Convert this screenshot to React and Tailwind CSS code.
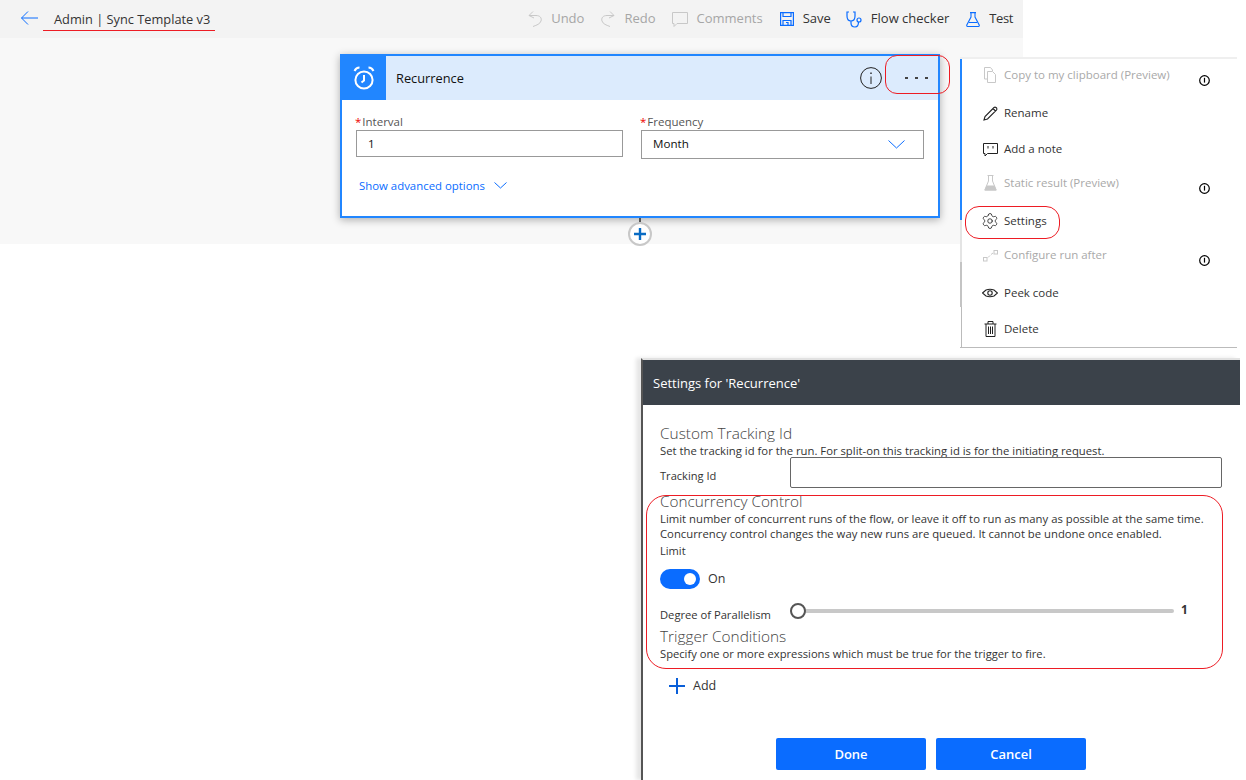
import React from 'react';
import { Settings } from 'lucide-react';

const Line = ({ w, h, d, className, sw = 1, children }) => (
  <svg width={w} height={h} viewBox={`0 0 ${w} ${h}`} className={`shrink-0 ${className || ''}`} fill="none" stroke="currentColor" strokeWidth={sw}>
    {d && <path d={d} />}
    {children}
  </svg>
);

const BackIcon = (p) => <Line w={17} h={14} d="M.5 7H17M7 .5L.5 7L7 13.5" {...p} />;
const UndoIcon = (p) => <Line w={14} h={16} d="M5 .5L1 4.5L6 7M1 4.5H8C12 4.5 14 7 13 10C12 13 9 14 5 15.5" {...p} />;
const RedoIcon = (p) => <Line w={14} h={16} d="M9 .5L13 4.5L8 7M13 4.5H6C2 4.5 0 7 1 10C2 13 5 14 9 15.5" {...p} />;
const CommentIcon = (p) => <Line w={16} h={15} d="M.5.5H15.5V11.5H5L2 14.5V11.5H.5Z" {...p} />;
const SaveIcon = (p) => <Line w={14} h={14} sw={1.2} d="M.6.6H13.4V13.4H.6ZM3 .6V4.5H11V.6M3 13.4V8.5H11V13.4M6 10.5H8V13" {...p} />;
const ScopeIcon = (p) => (
  <Line w={16} h={17} sw={1.2} d="M3 1H1V5C1 9 3 10 5 10C7 10 9 9 9 5V1H7M5 10V12C5 15 7 16 9 16C12 16 12.5 13 12.5 11" {...p}>
    <circle cx="13" cy="9" r="2" />
  </Line>
);
const FlaskIcon = (p) => <Line w={14} h={15} sw={1.1} d="M4 .6H10M5 .6V5L.8 13Q.4 14.5 2 14.5H12Q13.6 14.5 13.2 13L9 5V.6M3 10.5H11" {...p} />;
const ClockIcon = () => (
  <Line w={22} h={24} sw={2} className="text-white">
    <circle cx="11" cy="14" r="8.6" />
    <path d="M11 9V14.5L8.5 16.5" />
    <path d="M1.5 5C2.5 2.8 4.5 1.5 6.5 1.5M20.5 5C19.5 2.8 17.5 1.5 15.5 1.5" />
  </Line>
);
const Chevron = ({ w, h, className }) => <Line w={w} h={h} className={className} d={`M.5 .5L${w / 2} ${h - 1}L${w - 0.5} .5`} />;
const CopyIcon = (p) => <Line w={12} h={16} d="M4 12H.5V.5H6.5L8.5 3V4M3.5 4.5H8.5L11.5 7.5V15.5H3.5Z" {...p} />;
const PencilIcon = (p) => <Line w={15} h={15} sw={1.1} d="M1 14L2 10.5L11 1.5Q12 .8 13 1.5L13.7 2.2Q14.3 3.2 13.4 4.2L4.5 13ZM10 2.5L12.5 5" {...p} />;
const NoteIcon = (p) => <Line w={15} h={15} d="M.5 1.5H14.5V11.5H4.5L2 14V11.5H.5ZM5 4V6.5M10 4V6.5" {...p} />;
const FilledFlask = ({ className }) => (
  <Line w={13} h={16} className={className} d="M3.5 .5H9.5M4.5 .5V6L.8 15H12.2L8.5 6V.5">
    <path d="M2.5 10.5H10.5L12.5 15.5H.5Z" fill="currentColor" stroke="none" />
  </Line>
);
const GearIcon = ({ className }) => <Settings className={`shrink-0 w-[18px] h-[18px] -mx-[1px] ${className}`} strokeWidth={1.1} />;
const RunAfterIcon = (p) => (
  <Line w={15} h={15} {...p}>
    <rect x=".5" y="9.5" width="3.5" height="3.5" />
    <rect x="11" y="2.5" width="3.5" height="3.5" />
    <path d="M5 9.5L7 7.5M8 6.5L10 5" />
  </Line>
);
const EyeIcon = (p) => (
  <Line w={16} h={10} sw={1.1} d="M.5 5L4 2Q8 .5 12 2L15.5 5L12 8Q8 9.5 4 8Z" {...p}>
    <circle cx="8" cy="5" r="2.2" />
  </Line>
);
const TrashIcon = (p) => <Line w={13} h={16} d="M.5 3H12.5M4 3V.5H9V3M2 3V15.5H11V3M4.5 5.5V13M6.5 5.5V13M8.5 5.5V13" {...p} />;
const MiniInfo = () => (
  <Line w={11} h={11} sw={1.2} className="ml-auto mt-[11px] text-black">
    <circle cx="5.5" cy="5.5" r="4.8" />
    <path d="M5.5 2.8V7.6" />
  </Line>
);
const CardInfo = () => (
  <Line w={22} h={22} className="ml-auto text-[#222]">
    <circle cx="11" cy="11" r="10.4" />
    <path d="M11 9.5V17" />
    <path d="M11 5.5V7" strokeWidth="1.4" />
  </Line>
);

const toolbarItems = [
  { icon: UndoIcon, label: 'Undo', off: true, space: '' },
  { icon: RedoIcon, label: 'Redo', off: true, space: 'ml-[17px]' },
  { icon: CommentIcon, label: 'Comments', off: true, space: 'ml-[16px]' },
  { icon: SaveIcon, label: 'Save', space: 'ml-[17px]' },
  { icon: ScopeIcon, label: 'Flow checker', space: 'ml-[15px]' },
  { icon: FlaskIcon, label: 'Test', space: 'ml-[17px] tracking-[-0.4px]' },
];

const menuItems = [
  { icon: CopyIcon, label: 'Copy to my clipboard (Preview)', off: true, info: true, space: 'mt-[7px]' },
  { icon: PencilIcon, label: 'Rename', space: 'mt-[20px]' },
  { icon: NoteIcon, label: 'Add a note', space: 'mt-[18px]' },
  { icon: FilledFlask, label: 'Static result (Preview)', off: true, info: true, space: 'mt-[16px]' },
  { icon: GearIcon, label: 'Settings', space: 'mt-[20px]' },
  { icon: RunAfterIcon, label: 'Configure run after', off: true, info: true, space: 'mt-[16px]' },
  { icon: EyeIcon, label: 'Peek code', space: 'mt-[20px]' },
  { icon: TrashIcon, label: 'Delete', space: 'mt-[18px]' },
];

function Toolbar() {
  return (
    <div className="h-[38px] bg-[#f3f3f3] flex items-center text-[13px] text-[#333]">
      <BackIcon className="ml-[21px] mb-[2px] text-[#0a6cff]" />
      <span className="ml-[16px] pt-[1px] text-[12.8px]">Admin | Sync Template v3</span>
      <div className="ml-auto mr-[10px] flex items-center">
        {toolbarItems.map((item) => (
          <div key={item.label} className={`flex items-center ${item.space} ${item.off ? 'text-[#a6a6a6]' : ''}`}>
            <item.icon className={`mr-[9px] ${item.off ? 'text-[#c8c8c8]' : 'text-[#0a6cff]'}`} />
            <span>{item.label}</span>
          </div>
        ))}
      </div>
    </div>
  );
}

function RecurrenceCard() {
  return (
    <div className="w-[600px] h-[164px] border-2 border-[#2186ff] bg-white shadow-[0_2px_8px_rgba(0,0,0,0.3)]">
      <div className="h-[44px] bg-[#dcebfd] flex items-center">
        <div className="w-[44px] h-[44px] bg-[#2186ff] flex items-center justify-center">
          <ClockIcon />
        </div>
        <span className="ml-[10px] pt-[1px] text-[12.8px] text-[#111]">Recurrence</span>
        <CardInfo />
        <div className="ml-[23px] mr-[10px] flex gap-[7px]">
          <span className="w-[3px] h-[2px] bg-[#444]"></span>
          <span className="w-[3px] h-[2px] bg-[#444]"></span>
          <span className="w-[3px] h-[2px] bg-[#444]"></span>
        </div>
      </div>
      <div className="px-[14px] pt-[13px] flex">
        <div className="w-[267px]">
          <div className="h-[17px] -ml-[1px] text-[11.5px] text-[#555] leading-[17px]"><span className="text-[#e00] mr-[1px]">*</span>Interval</div>
          <div className="h-[27px] border border-[#999] flex items-center pl-[11px] text-[11.6px] text-[#111]">1</div>
        </div>
        <div className="ml-[18px] w-[283px]">
          <div className="h-[17px] -ml-[1px] text-[11.5px] text-[#555] leading-[17px]"><span className="text-[#e00] mr-[1px]">*</span>Frequency</div>
          <div className="h-[29px] border border-[#999] flex items-center pl-[11px] pr-[18px] text-[11.6px] text-[#111]">
            <span className="mb-[1px]">Month</span>
            <Chevron w={17} h={9} className="ml-auto text-[#0a6cff]" />
          </div>
        </div>
      </div>
      <div className="ml-[17px] mt-[18px] flex items-center text-[11.4px] text-[#0a6cff]">
        <span>Show advanced options</span>
        <Chevron w={13} h={7} className="ml-[9px]" />
      </div>
    </div>
  );
}

function ActionMenu() {
  return (
    <div className="absolute left-[960px] top-[57px] w-[277px] h-[291px] bg-white border-t-2 border-t-[#efefef] border-b border-b-[#bbb] flex">
      <div className="w-[2px] flex flex-col shrink-0">
        <div className="h-[161px] bg-[#2186ff]"></div>
        <div className="h-[42px] bg-[#e4e4e4]"></div>
        <div className="h-[45px] bg-[#c4c4c4]"></div>
        <div className="flex-1 w-[1px] ml-[1px] bg-[#bbb]"></div>
      </div>
      <div className="flex-1 flex flex-col">
        {menuItems.map((item) => (
          <div key={item.label} className={`h-[18px] flex items-center pl-[20px] pr-[27px] text-[11.5px] ${item.space} ${item.off ? 'text-[#a9a9a9]' : 'text-[#333]'}`}>
            <div className="w-[16px] flex justify-center">
              <item.icon className={item.off ? 'text-[#c8c8c8]' : 'text-[#222]'} />
            </div>
            <span className="ml-[6px]">{item.label}</span>
            {item.info && <MiniInfo />}
          </div>
        ))}
      </div>
    </div>
  );
}

function SettingsWindow() {
  return (
    <div className="absolute left-[641px] top-[358px] w-[599px] h-[422px] bg-white border-t-2 border-t-[#e2e2e2] border-l-2 border-l-[#555] shadow-[-5px_0_4px_rgba(0,0,0,0.1)] flex flex-col">
      <div className="h-[45px] shrink-0 bg-[#3b424a] flex items-center pl-[10px] pt-[2px] text-[13px] text-white">Settings for 'Recurrence'</div>
      <div className="pl-[17px] pr-[18px] text-[#333]">
        <div className="mt-[20px] h-[17px] leading-[18px] text-[15.4px] font-light text-[#444]">Custom Tracking Id</div>
        <div className="h-[18px] leading-[18px] text-[11.3px]">Set the tracking id for the run. For split-on this tracking id is for the initiating request.</div>
        <div className="flex mt-[-3px] items-center">
          <span className="w-[130px] mt-[7px] text-[11.1px]">Tracking Id</span>
          <div className="flex-1 h-[31px] border border-[#666] rounded-[2px]"></div>
        </div>
        <div className="mt-[4px] h-[19px] leading-[18px] text-[15.3px] font-light text-[#444]">Concurrency Control</div>
        <div className="h-[15px] leading-[15px] text-[11.3px]">Limit number of concurrent runs of the flow, or leave it off to run as many as possible at the same time.</div>
        <div className="h-[15px] leading-[15px] text-[11.3px]">Concurrency control changes the way new runs are queued. It cannot be undone once enabled.</div>
        <div className="mt-[1px] h-[17px] leading-[17px] text-[11.1px]">Limit</div>
        <div className="mt-[10px] flex items-center">
          <div className="w-[40px] h-[20px] rounded-full bg-[#0a6cff] flex items-center justify-end pr-[4px]">
            <span className="w-[12px] h-[12px] rounded-full bg-white"></span>
          </div>
          <span className="ml-[8px] text-[12.5px] mt-[1px]">On</span>
        </div>
        <div className="mt-[11px] h-[22px] flex">
          <span className="w-[130px] mt-[7px] text-[11.2px] leading-[16px]">Degree of Parallelism</span>
          <div className="w-[384px] flex items-center">
            <div className="w-full h-[4px] bg-[#c8c8c8] rounded-full flex items-center">
              <span className="w-[16px] h-[16px] rounded-full border-2 border-[#555] bg-white shrink-0"></span>
            </div>
          </div>
          <span className="ml-[7px] text-[12px] font-bold leading-[20px]">1</span>
        </div>
        <div className="mt-[6px] h-[18px] leading-[18px] text-[15.4px] font-light text-[#444]">Trigger Conditions</div>
        <div className="h-[16px] leading-[16px] text-[11.2px]">Specify one or more expressions which must be true for the trigger to fire.</div>
        <div className="mt-[15px] ml-[9px] h-[18px] flex items-center">
          <Line w={16} h={16} sw={2} d="M8 0V16M0 8H16" className="text-[#0a5fd8]" />
          <span className="ml-[8px] pt-[1px] text-[12.5px]">Add</span>
        </div>
        <div className="mt-[43px] ml-[116px] flex gap-[10px]">
          <button className="w-[150px] h-[32px] pt-[1px] bg-[#0a6cff] rounded-[2px] text-white text-[13px] font-semibold">Done</button>
          <button className="w-[150px] h-[32px] pt-[1px] bg-[#0a6cff] rounded-[2px] text-white text-[13px] font-semibold">Cancel</button>
        </div>
      </div>
    </div>
  );
}

export default function App() {
  return (
    <div className="relative w-[1246px] h-[780px] overflow-hidden bg-white" style={{ fontFamily: '"Open Sans", "Liberation Sans", sans-serif' }}>
      <div className="w-[1023px]">
        <Toolbar />
        <div className="h-[206px] bg-[#f8f8f8] pt-[16px] pl-[340px]">
          <RecurrenceCard />
          <div className="w-[600px] flex flex-col items-center">
            <div className="w-[2px] h-[4px] bg-[#555]"></div>
            <div className="w-[24px] h-[24px] rounded-full border-2 border-[#c8c8c8] bg-white flex items-center justify-center">
              <Line w={12} h={12} sw={2.4} d="M6 0V12M0 6H12" className="text-[#0a6cc4]" />
            </div>
          </div>
        </div>
      </div>

      <ActionMenu />
      <SettingsWindow />

      {/* red annotations */}
      <div className="absolute left-[43px] top-[30px] w-[172px] h-[1px] bg-[#ed1c24]"></div>
      <div className="absolute left-[885px] top-[55px] w-[65px] h-[39px] border border-[#ed1c24] rounded-[12px]"></div>
      <div className="absolute left-[965px] top-[206px] w-[95px] h-[33px] border border-[#ed1c24] rounded-[14px]"></div>
      <div className="absolute left-[646px] top-[495px] w-[577px] h-[174px] border border-[#ed1c24] rounded-[20px]"></div>
    </div>
  );
}
